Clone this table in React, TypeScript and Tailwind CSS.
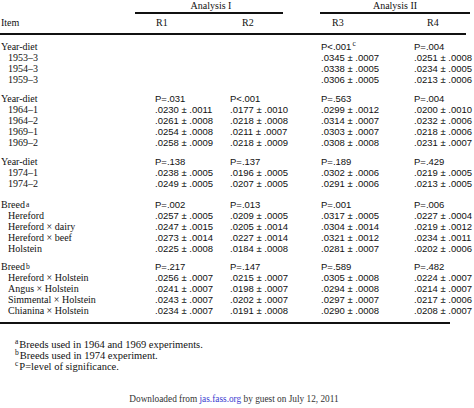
import React from "react";

type Row = { label: string; vals: string[] };
type Group = { label: string; sup?: string; stats: (string | null)[]; statSup?: (string | null)[]; rows: Row[]; gap: string };

const groups: Group[] = [
  {
    label: "Year-diet",
    stats: ["", "", "P<.001", "P=.004"],
    statSup: [null, null, "c", null],
    gap: "mt-0",
    rows: [
      { label: "1953–3", vals: ["", "", ".0345 ± .0007", ".0251 ± .0008"] },
      { label: "1954–3", vals: ["", "", ".0338 ± .0005", ".0234 ± .0005"] },
      { label: "1959–3", vals: ["", "", ".0306 ± .0005", ".0213 ± .0006"] },
    ],
  },
  {
    label: "Year-diet",
    stats: ["P=.031", "P<.001", "P=.563", "P=.004"],
    gap: "mt-[8px]",
    rows: [
      { label: "1964–1", vals: [".0230 ± .0011", ".0177 ± .0010", ".0299 ± .0012", ".0200 ± .0010"] },
      { label: "1964–2", vals: [".0261 ± .0008", ".0218 ± .0008", ".0314 ± .0007", ".0232 ± .0006"] },
      { label: "1969–1", vals: [".0254 ± .0008", ".0211 ± .0007", ".0303 ± .0007", ".0218 ± .0006"] },
      { label: "1969–2", vals: [".0258 ± .0009", ".0218 ± .0009", ".0308 ± .0008", ".0231 ± .0007"] },
    ],
  },
  {
    label: "Year-diet",
    stats: ["P=.138", "P=.137", "P=.189", "P=.429"],
    gap: "mt-[8px]",
    rows: [
      { label: "1974–1", vals: [".0238 ± .0005", ".0196 ± .0005", ".0302 ± .0006", ".0219 ± .0005"] },
      { label: "1974–2", vals: [".0249 ± .0005", ".0207 ± .0005", ".0291 ± .0006", ".0213 ± .0005"] },
    ],
  },
  {
    label: "Breed",
    sup: "a",
    stats: ["P=.002", "P=.013", "P=.001", "P=.006"],
    gap: "mt-[10px]",
    rows: [
      { label: "Hereford", vals: [".0257 ± .0005", ".0209 ± .0005", ".0317 ± .0005", ".0227 ± .0004"] },
      { label: "Hereford × dairy", vals: [".0247 ± .0015", ".0205 ± .0014", ".0304 ± .0014", ".0219 ± .0012"] },
      { label: "Hereford × beef", vals: [".0273 ± .0014", ".0227 ± .0014", ".0321 ± .0012", ".0234 ± .0011"] },
      { label: "Holstein", vals: [".0225 ± .0008", ".0184 ± .0008", ".0281 ± .0007", ".0202 ± .0006"] },
    ],
  },
  {
    label: "Breed",
    sup: "b",
    stats: ["P=.217", "P=.147", "P=.589", "P=.482"],
    gap: "mt-[7px]",
    rows: [
      { label: "Hereford × Holstein", vals: [".0256 ± .0007", ".0215 ± .0007", ".0305 ± .0008", ".0224 ± .0007"] },
      { label: "Angus × Holstein", vals: [".0241 ± .0007", ".0198 ± .0007", ".0294 ± .0008", ".0214 ± .0007"] },
      { label: "Simmental × Holstein", vals: [".0243 ± .0007", ".0202 ± .0007", ".0297 ± .0007", ".0217 ± .0006"] },
      { label: "Chianina × Holstein", vals: [".0234 ± .0007", ".0191 ± .0008", ".0290 ± .0008", ".0208 ± .0007"] },
    ],
  },
];

const serif = "font-['Liberation_Serif','Times_New_Roman',serif]";
const sans = "font-['Liberation_Sans',Arial,sans-serif]";
const cols = "grid grid-cols-[155px_75px_91px_93px_60px]";

function Line({ label, sub, vals, sups, indent }: { label: string; sub?: string; vals: (string | null)[]; sups?: (string | null)[]; indent?: boolean }) {
  return (
    <div className={`${cols} h-[11px] leading-[11px] whitespace-nowrap`}>
      <div className={`${serif} text-[10px] ${indent ? "pl-[8px]" : "pl-[1px]"}`}>
        {label}
        {sub && <sup className="text-[7.5px] relative -top-[1px] ml-[1px]">{sub}</sup>}
      </div>
      {vals.map((v, i) => (
        <div key={i} className={`${sans} text-[9.5px]`}>
          {v}
          {sups && sups[i] && <sup className={`${serif} text-[7.5px] ml-[1px]`}>{sups[i]}</sup>}
        </div>
      ))}
    </div>
  );
}

export default function App() {
  return (
    <div className="w-[474px] h-[408px] bg-white text-[#111] overflow-hidden">
      {/* analysis headers */}
      <div className={`flex h-[14px] ${serif} text-[10px] leading-[11px]`}>
        <div className="w-[135px]" />
        <div className="w-[148px] border-b-2 border-[#111] text-center pl-[4px]">Analysis I</div>
        <div className="w-[37px]" />
        <div className="w-[150px] border-b-2 border-[#111] text-center">Analysis II</div>
      </div>

      <div className={`${cols} w-[466px] h-[21px] pt-[3px] border-b-2 border-[#111] ${serif} text-[10px] leading-[11px]`}>
        <div className="pl-[1px]">Item</div>
        <div className="pl-[1px]">R1</div>
        <div className="pl-[12px]">R2</div>
        <div className="pl-[11px]">R3</div>
        <div className="pl-[13px]">R4</div>
      </div>

      <div className="w-[450px] pt-[6px] pb-[6px] border-b-2 border-[#111]">
        {groups.map((g, gi) => (
          <div key={gi} className={g.gap}>
            <Line label={g.label} sub={g.sup} vals={g.stats} sups={g.statSup} />
            {g.rows.map((r, ri) => (
              <Line key={ri} label={r.label} vals={r.vals} indent />
            ))}
          </div>
        ))}
      </div>

      <div className={`${serif} text-[10.5px] leading-[11px] pl-[15px] mt-[15px]`}>
        <div><sup className="text-[7.5px] mr-[1px]">a</sup>Breeds used in 1964 and 1969 experiments.</div>
        <div><sup className="text-[7.5px] mr-[1px]">b</sup>Breeds used in 1974 experiment.</div>
        <div><sup className="text-[7.5px] mr-[1px]">c</sup>P=level of significance.</div>
      </div>

      <div className={`${serif} text-[9.3px] leading-[11px] text-[#333] text-center mt-[22px] pr-[6px]`}>
        Downloaded from <span className="text-[#3a3ad0]">jas.fass.org</span> by guest on July 12, 2011
      </div>
    </div>
  );
}
